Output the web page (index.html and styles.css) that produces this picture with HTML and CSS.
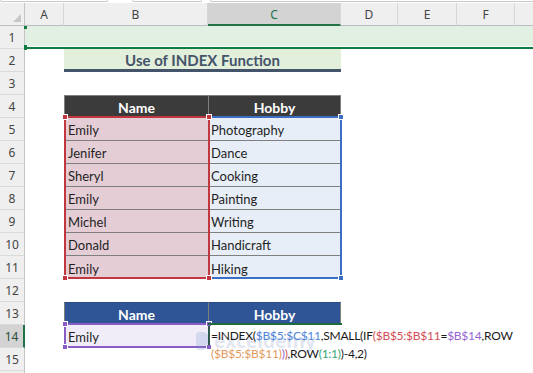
FILE: index.html
```html
<!DOCTYPE html>
<html>
<head>
<meta charset="utf-8">
<link rel="stylesheet" href="styles.css">
</head>
<body>
<div class="topbar"><span class="box b1"></span><span class="box b2"></span><span class="box b3"></span></div>
<div class="sheet">
  <div class="ch corner"><span class="tri"></span></div>
  <div class="ch">A</div>
  <div class="ch">B</div>
  <div class="ch sel">C</div>
  <div class="ch">D</div>
  <div class="ch">E</div>
  <div class="ch">F</div>
  <div class="ch last"></div>

  <div class="rowhdrs">
    <div class="rh">1</div><div class="rh">2</div><div class="rh">3</div><div class="rh">4</div>
    <div class="rh">5</div><div class="rh">6</div><div class="rh">7</div><div class="rh">8</div>
    <div class="rh">9</div><div class="rh">10</div><div class="rh">11</div><div class="rh">12</div>
    <div class="rh">13</div><div class="rh sel">14</div><div class="rh">15</div><div class="rh stub"></div>
  </div>

  <div class="row1"><i class="mk mk-t"></i><i class="mk mk-b"></i></div>
  <div class="title">Use of INDEX Function</div>

  <div class="t1">
    <div class="th">Name</div><div class="th">Hobby</div>
    <div class="td nm">Emily</div><div class="td hb">Photography</div>
    <div class="td nm">Jenifer</div><div class="td hb">Dance</div>
    <div class="td nm">Sheryl</div><div class="td hb">Cooking</div>
    <div class="td nm">Emily</div><div class="td hb">Painting</div>
    <div class="td nm">Michel</div><div class="td hb">Writing</div>
    <div class="td nm">Donald</div><div class="td hb">Handicraft</div>
    <div class="td nm last">Emily</div><div class="td hb last">Hiking</div>
    <div class="selbox blue"><i class="h tr"></i><i class="h br"></i></div>
    <div class="selbox red"><i class="h tl"></i><i class="h tr"></i><i class="h bl"></i><i class="h br"></i></div>
  </div>

  <div class="t2head"><div class="th">Name</div><div class="th">Hobby</div></div>
  <div class="b14">
    <span class="val">Emily</span>
    <div class="selbox purple"><i class="h tl"></i><i class="h tr"></i><i class="h bl"></i><i class="h br"></i></div>
  </div>
  <div class="wm" aria-hidden="true"><span class="wm-logo"></span><span class="wm-text">exceldemy</span></div>
  <div class="formula">=INDEX(<span class="c-blue">$B$5:$C$11</span>,SMALL(IF<span class="c-red">(</span><span class="c-red">$B$5:$B$11</span>=<span class="c-purple">$B$14</span>,ROW<br><span class="c-orange">($B$5:$B$11)</span><span class="c-purple">)</span><span class="c-red">)</span>,ROW<span class="c-green">(1:1)</span>)-4,2)</div>
</div>
</body>
</html>
```

FILE: styles.css
```css
* { box-sizing: border-box; }
html, body { margin: 0; padding: 0; background: #ffffff; }
body {
  width: 533px;
  height: 373px;
  overflow: hidden;
  font-family: Lato, "Open Sans", sans-serif;
  font-size: 13px;
  color: #1f1f1f;
}

.topbar {
  height: 3px;
  display: flex;
  background: #ffffff;
}
.box {
  height: 2px;
  border: 1px solid #c8c8c8;
  border-top: none;
  border-radius: 0 0 4px 4px;
}
.b1 { width: 108px; }
.b2 { width: 70px; margin-left: 24px; }
.b3 { flex: 1; margin-left: 8px; border-right: none; border-radius: 0 0 0 4px; }

.sheet {
  display: grid;
  grid-template-columns: 25px 39px 144px 133px 57px 59px 58px 1fr;
  grid-template-rows: repeat(16, 23px) 2px;
  position: relative;
  background: #ffffff;
  height: 370px;
  overflow: hidden;
}

/* column headers */
.ch {
  grid-row: 1;
  background: #efefef;
  border-right: 1px solid #d6d6d6;
  border-bottom: 1px solid #bdbdbd;
  font-family: "Noto Sans", "Open Sans", sans-serif;
  font-size: 12px;
  color: #444444;
  display: flex;
  align-items: center;
  justify-content: center;
  padding-top: 1px;
}
.ch.corner { border-right: 1px solid #c4c4c4; position: relative; }
.ch.sel {
  background: #d3d3d3;
  color: #217346;
  border-bottom: 2px solid #217346;
  padding-top: 2px;
}
.ch.last { border-right: none; }
.tri {
  position: absolute;
  right: 3px;
  bottom: 3px;
  width: 0;
  height: 0;
  border-left: 8px solid transparent;
  border-bottom: 8px solid #c6c6c6;
}

/* row headers */
.rowhdrs {
  grid-column: 1;
  grid-row: 2 / 18;
  display: flex;
  flex-direction: column;
}
.rh {
  height: 23px;
  flex: none;
  background: #efefef;
  border-right: 1px solid #c4c4c4;
  border-bottom: 1px solid #dadada;
  font-family: "Noto Sans", "Open Sans", sans-serif;
  font-size: 12px;
  color: #444444;
  display: flex;
  align-items: center;
  justify-content: center;
}
.rh.stub { height: 2px; border-bottom: none; }
.rh.sel {
  background: #d3d3d3;
  color: #2b4d3a;
  border-right: 2px solid #217346;
}

/* row 1 selection */
.row1 {
  grid-column: 2 / 9;
  grid-row: 2;
  background: #e2efe3;
  border-bottom: 2px solid #107c41;
  box-shadow: inset 0 -1px 0 #ffffff;
  position: relative;
}
.mk {
  position: absolute;
  left: -1px;
  width: 3px;
  background: #107c41;
}
.mk-t { top: 0; height: 3px; }
.mk-b { bottom: -3px; height: 5px; }

/* title */
.title {
  grid-column: 3 / 5;
  grid-row: 3;
  background: #e2efda;
  border-bottom: 3px solid #44546a;
  color: #44546a;
  font-weight: bold;
  font-size: 15px;
  display: flex;
  align-items: center;
  justify-content: center;
  padding-top: 2px;
}

/* table 1 */
.t1 {
  grid-column: 3 / 5;
  grid-row: 5 / 13;
  display: grid;
  grid-template-columns: 144px 133px;
  grid-template-rows: repeat(8, 23px);
  position: relative;
}
.th {
  background: #3b3b3b;
  color: #ffffff;
  font-weight: bold;
  font-size: 14px;
  display: flex;
  align-items: center;
  justify-content: center;
  border-top: 1px solid #7f7f7f;
  border-left: 1px solid #7f7f7f;
  padding-top: 1px;
}
.th:nth-child(2) { border-right: 1px solid #7f7f7f; }
.td {
  padding-left: 4px;
  padding-top: 2px;
  display: flex;
  align-items: center;
  border-bottom: 1px solid #7f7f7f;
  color: #1f1f1f;
}
.td.last { border-bottom: none; }
.nm { background: #e5cdd6; }
.hb { background: #e8eef8; padding-left: 3px; }

.selbox {
  position: absolute;
  border: 2px solid;
  pointer-events: none;
}
.selbox .h {
  position: absolute;
  width: 6px;
  height: 6px;
  border: 1px solid #ffffff;
}
.h.tl { top: -4px; left: -4px; }
.h.tr { top: -4px; right: -4px; }
.h.bl { bottom: -4px; left: -4px; }
.h.br { bottom: -4px; right: -4px; }

.selbox.red { border-color: #c1373f; left: 0; top: 21px; width: 146px; height: 163px; }
.selbox.red .h { background: #c1373f; }
.selbox.blue { border-color: #3a6fc4; left: 144px; top: 21px; width: 134px; height: 163px; }
.selbox.blue .h { background: #3a6fc4; }

/* table 2 */
.t2head {
  grid-column: 3 / 5;
  grid-row: 14;
  display: grid;
  grid-template-columns: 144px 133px;
}
.t2head .th {
  background: #2f5597;
  border-top-color: #2a4a85;
  border-left-color: #7f7f7f;
}
.t2head .th:nth-child(2) { border-right-color: #7f7f7f; }

.b14 {
  grid-column: 3;
  grid-row: 15;
  background: #f0edf8;
  position: relative;
  display: flex;
  align-items: center;
  padding-left: 4px;
  padding-top: 1px;
}
.selbox.purple { border-color: #8a5cc6; left: 0; top: -2px; width: 146px; height: 25px; }
.selbox.purple .h { background: #8a5cc6; }

.formula {
  grid-column: 4 / 9;
  grid-row: 15 / 17;
  position: relative;
  white-space: nowrap;
  line-height: 18px;
  padding-left: 3px;
  padding-top: 2px;
  color: #1a1a1a;
  font-size: 12px;
  letter-spacing: -0.25px;
}
.formula::before {
  content: "";
  position: absolute;
  left: 0;
  top: -2px;
  width: 134px;
  height: 2px;
  background: #1e6b3e;
}
.formula::after {
  content: "";
  position: absolute;
  left: 0;
  top: 1px;
  width: 2px;
  height: 19px;
  background: #2f5a4b;
}
.c-blue { color: #4f86d8; }
.c-red { color: #d24f55; }
.c-purple { color: #9466d4; }
.c-orange { color: #e39a5e; }
.c-green { color: #3aa577; }

/* watermark */
.wm {
  position: absolute;
  left: 196px;
  top: 329px;
  display: flex;
  align-items: center;
  gap: 4px;
  opacity: 0.22;
  pointer-events: none;
}
.wm-logo {
  width: 14px;
  height: 18px;
  background: #6f8fd0;
  border-radius: 3px 8px 8px 3px;
}
.wm-text {
  font-family: "Open Sans", sans-serif;
  font-weight: bold;
  font-size: 19px;
  line-height: 18px;
  color: #7f93c2;
}
```
